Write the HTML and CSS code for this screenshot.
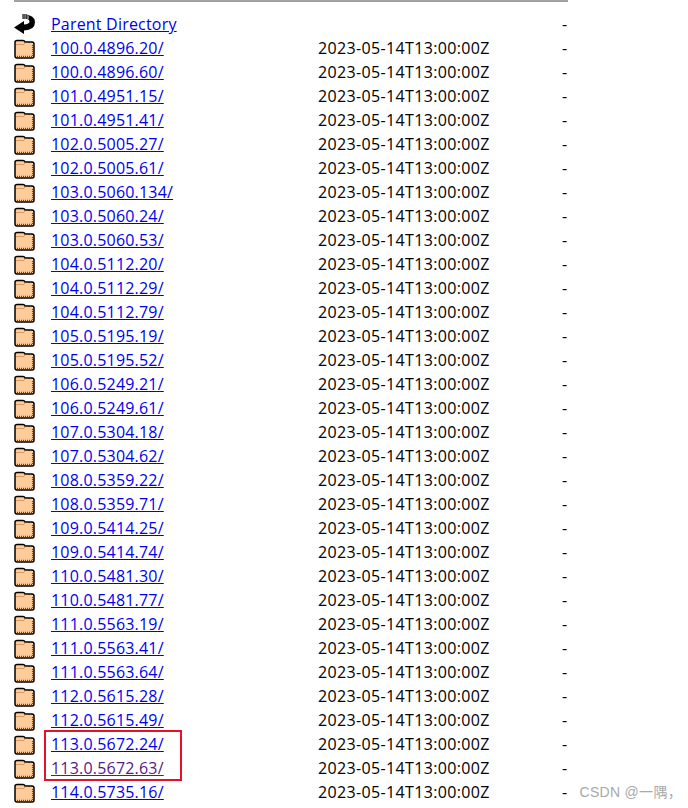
FILE: index.html
```html
<!DOCTYPE html>
<html lang="en">
<head>
    <meta charset="UTF-8">
    <title>Index of chromedriver</title>
    <link rel="stylesheet" href="styles.css">
</head>
<body>
    <svg class="defs" width="0" height="0">
        <symbol id="folder" viewBox="0 0 22 22">
            <path d="M1 5.5 Q1 3.5 3 3.5 H9 Q10.5 3.5 11 5 H18 Q20 5 20 7 V19 Q20 21 18 21 H3 Q1 21 1 19 Z" fill="#ffcc99" stroke="#000" stroke-width="1.5"/>
            <path d="M2 7.5 H10 L11 5.5" fill="none" stroke="#c89058" stroke-width="0.8"/>
            <path d="M3 19.5 H18.6 V8" fill="none" stroke="#6b4520" stroke-width="1.3" stroke-dasharray="1 1"/>
        </symbol>
        <symbol id="back" viewBox="0 0 22 22">
            <path d="M0 14.5 L10 8 V11.5 Q15.5 11 15.5 8.5 Q15.5 6 11 5.5 L9 1 Q21 2 21 9 Q21 17 10 17.5 V21 Z" fill="#000"/>
            <path d="M8 1 H12 L15 3 V6 L12 6 H8 Z" fill="#777"/>
            <path d="M10 1 V6 M12.5 1.5 V6" stroke="#222" stroke-width="0.8"/>
        </symbol>
    </svg>

    <hr class="rule">
    <div class="listing">
        <div class="row"><svg class="icon"><use href="#back"/></svg><a href="#">Parent Directory</a><span class="date"></span><span class="size">-</span></div>
        <div class="row"><svg class="icon"><use href="#folder"/></svg><a href="#">100.0.4896.20/</a><span class="date">2023-05-14T13:00:00Z</span><span class="size">-</span></div>
        <div class="row"><svg class="icon"><use href="#folder"/></svg><a href="#">100.0.4896.60/</a><span class="date">2023-05-14T13:00:00Z</span><span class="size">-</span></div>
        <div class="row"><svg class="icon"><use href="#folder"/></svg><a href="#">101.0.4951.15/</a><span class="date">2023-05-14T13:00:00Z</span><span class="size">-</span></div>
        <div class="row"><svg class="icon"><use href="#folder"/></svg><a href="#">101.0.4951.41/</a><span class="date">2023-05-14T13:00:00Z</span><span class="size">-</span></div>
        <div class="row"><svg class="icon"><use href="#folder"/></svg><a href="#">102.0.5005.27/</a><span class="date">2023-05-14T13:00:00Z</span><span class="size">-</span></div>
        <div class="row"><svg class="icon"><use href="#folder"/></svg><a href="#">102.0.5005.61/</a><span class="date">2023-05-14T13:00:00Z</span><span class="size">-</span></div>
        <div class="row"><svg class="icon"><use href="#folder"/></svg><a href="#">103.0.5060.134/</a><span class="date">2023-05-14T13:00:00Z</span><span class="size">-</span></div>
        <div class="row"><svg class="icon"><use href="#folder"/></svg><a href="#">103.0.5060.24/</a><span class="date">2023-05-14T13:00:00Z</span><span class="size">-</span></div>
        <div class="row"><svg class="icon"><use href="#folder"/></svg><a href="#">103.0.5060.53/</a><span class="date">2023-05-14T13:00:00Z</span><span class="size">-</span></div>
        <div class="row"><svg class="icon"><use href="#folder"/></svg><a href="#">104.0.5112.20/</a><span class="date">2023-05-14T13:00:00Z</span><span class="size">-</span></div>
        <div class="row"><svg class="icon"><use href="#folder"/></svg><a href="#">104.0.5112.29/</a><span class="date">2023-05-14T13:00:00Z</span><span class="size">-</span></div>
        <div class="row"><svg class="icon"><use href="#folder"/></svg><a href="#">104.0.5112.79/</a><span class="date">2023-05-14T13:00:00Z</span><span class="size">-</span></div>
        <div class="row"><svg class="icon"><use href="#folder"/></svg><a href="#">105.0.5195.19/</a><span class="date">2023-05-14T13:00:00Z</span><span class="size">-</span></div>
        <div class="row"><svg class="icon"><use href="#folder"/></svg><a href="#">105.0.5195.52/</a><span class="date">2023-05-14T13:00:00Z</span><span class="size">-</span></div>
        <div class="row"><svg class="icon"><use href="#folder"/></svg><a href="#">106.0.5249.21/</a><span class="date">2023-05-14T13:00:00Z</span><span class="size">-</span></div>
        <div class="row"><svg class="icon"><use href="#folder"/></svg><a href="#">106.0.5249.61/</a><span class="date">2023-05-14T13:00:00Z</span><span class="size">-</span></div>
        <div class="row"><svg class="icon"><use href="#folder"/></svg><a href="#">107.0.5304.18/</a><span class="date">2023-05-14T13:00:00Z</span><span class="size">-</span></div>
        <div class="row"><svg class="icon"><use href="#folder"/></svg><a href="#">107.0.5304.62/</a><span class="date">2023-05-14T13:00:00Z</span><span class="size">-</span></div>
        <div class="row"><svg class="icon"><use href="#folder"/></svg><a href="#">108.0.5359.22/</a><span class="date">2023-05-14T13:00:00Z</span><span class="size">-</span></div>
        <div class="row"><svg class="icon"><use href="#folder"/></svg><a href="#">108.0.5359.71/</a><span class="date">2023-05-14T13:00:00Z</span><span class="size">-</span></div>
        <div class="row"><svg class="icon"><use href="#folder"/></svg><a href="#">109.0.5414.25/</a><span class="date">2023-05-14T13:00:00Z</span><span class="size">-</span></div>
        <div class="row"><svg class="icon"><use href="#folder"/></svg><a href="#">109.0.5414.74/</a><span class="date">2023-05-14T13:00:00Z</span><span class="size">-</span></div>
        <div class="row"><svg class="icon"><use href="#folder"/></svg><a href="#">110.0.5481.30/</a><span class="date">2023-05-14T13:00:00Z</span><span class="size">-</span></div>
        <div class="row"><svg class="icon"><use href="#folder"/></svg><a href="#">110.0.5481.77/</a><span class="date">2023-05-14T13:00:00Z</span><span class="size">-</span></div>
        <div class="row"><svg class="icon"><use href="#folder"/></svg><a href="#">111.0.5563.19/</a><span class="date">2023-05-14T13:00:00Z</span><span class="size">-</span></div>
        <div class="row"><svg class="icon"><use href="#folder"/></svg><a href="#">111.0.5563.41/</a><span class="date">2023-05-14T13:00:00Z</span><span class="size">-</span></div>
        <div class="row"><svg class="icon"><use href="#folder"/></svg><a href="#">111.0.5563.64/</a><span class="date">2023-05-14T13:00:00Z</span><span class="size">-</span></div>
        <div class="row"><svg class="icon"><use href="#folder"/></svg><a href="#">112.0.5615.28/</a><span class="date">2023-05-14T13:00:00Z</span><span class="size">-</span></div>
        <div class="row"><svg class="icon"><use href="#folder"/></svg><a href="#">112.0.5615.49/</a><span class="date">2023-05-14T13:00:00Z</span><span class="size">-</span></div>
        <div class="row"><svg class="icon"><use href="#folder"/></svg><a href="#">113.0.5672.24/</a><span class="date">2023-05-14T13:00:00Z</span><span class="size">-</span></div>
        <div class="row"><svg class="icon"><use href="#folder"/></svg><a class="visited" href="#">113.0.5672.63/</a><span class="date">2023-05-14T13:00:00Z</span><span class="size">-</span></div>
        <div class="row"><svg class="icon"><use href="#folder"/></svg><a href="#">114.0.5735.16/</a><span class="date">2023-05-14T13:00:00Z</span><span class="size">-</span></div>
    </div>

    <div class="redbox"></div>
    <div class="watermark">CSDN @一隅，</div>
</body>
</html>
```

FILE: styles.css
```css
body {
    margin: 0;
    padding: 0 0 0 14px;
    background-color: #fff;
    font-family: "Open Sans", sans-serif;
    font-size: 16px;
    color: #000;
    overflow: hidden;
}
.defs {
    position: absolute;
}
.rule {
    width: 554px;
    height: 2px;
    margin: 0 0 10px 0;
    border: 0;
    background-color: #a0a0a0;
}
.row {
    display: flex;
    align-items: center;
    height: 24px;
}
.icon {
    width: 22px;
    height: 22px;
    margin-right: 15px;
    flex-shrink: 0;
}
.row a {
    width: 267px;
    flex-shrink: 0;
    color: #0000ee;
    letter-spacing: 0.2px;
}
.row a.visited {
    color: #551a8b;
}
.date {
    width: 244px;
    flex-shrink: 0;
    letter-spacing: 0.35px;
}
.redbox {
    position: absolute;
    left: 44px;
    top: 730px;
    width: 134px;
    height: 47px;
    border: 2px solid #e8112d;
}
.watermark {
    position: absolute;
    right: 6px;
    top: 781px;
    font-family: "Liberation Sans", "Noto Sans CJK SC", sans-serif;
    font-size: 14px;
    letter-spacing: 0.3px;
    color: #a8a8a8;
}
```
